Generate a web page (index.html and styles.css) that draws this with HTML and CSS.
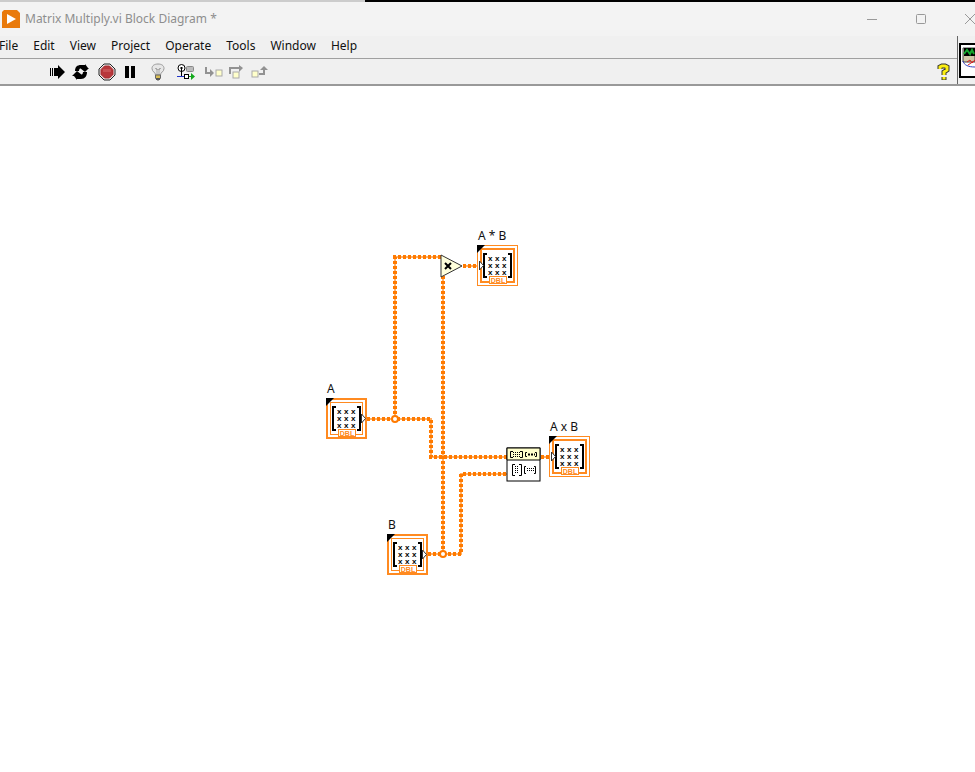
FILE: index.html
```html
<!DOCTYPE html>
<html lang="en">
  <head>
    <meta charset="utf-8">
    <title>Matrix Multiply.vi Block Diagram</title>
    <link rel="stylesheet" href="styles.css">
  </head>
  <body>
    <header class="titlebar">
      <svg class="app-icon" width="18" height="18" viewBox="0 0 18 18">
        <path d="M2 0H15L18 3V18H0V2Z" fill="#e97a0c"/>
        <path d="M5 4L14 9L5 14Z" fill="#fff"/>
      </svg>
      <h1>Matrix Multiply.vi Block Diagram *</h1>
      <div class="window-buttons">
        <button type="button" aria-label="Minimize">
          <svg width="12" height="12"><path d="M1 6.5H11"/></svg>
        </button>
        <button type="button" aria-label="Maximize">
          <svg width="12" height="12"><rect x="1.5" y="1.5" width="9" height="9" rx="1"/></svg>
        </button>
        <button type="button" aria-label="Close">
          <svg width="12" height="12"><path d="M1 1L11 11M11 1L1 11"/></svg>
        </button>
      </div>
    </header>

    <div class="chrome">
      <div class="bars">
        <nav class="menu">
          <a href="#">File</a>
          <a href="#">Edit</a>
          <a href="#">View</a>
          <a href="#">Project</a>
          <a href="#">Operate</a>
          <a href="#">Tools</a>
          <a href="#">Window</a>
          <a href="#">Help</a>
        </nav>
        <div class="toolbar">
          <button type="button" aria-label="Run">
            <svg width="18" height="16" viewBox="0 0 18 16">
              <path d="M2.500 4V12M4.500 4V12M6.500 4V12" stroke="#000"/>
              <path d="M7 4H10V1L17 8L10 15V12H7Z"/>
            </svg>
          </button>
          <button type="button" aria-label="Run continuously">
            <svg width="18" height="16" viewBox="0 0 18 16">
              <path d="M3 7C3 3 5 1 9 1H13V0L16 4H17L13 8L8 4H10C8 4 7 5 7 7Z"/>
              <path d="M15 8C15 12 13 15 9 15H5V16L2 12L0 12L5 7L10 11H8C10 11 11 10 11 8Z"/>
            </svg>
          </button>
          <button type="button" class="abort" aria-label="Abort">
            <svg width="18" height="18" viewBox="0 0 18 18">
              <path d="M6 1H12L17 6V12L12 17H6L1 12V6Z" fill="#eee" stroke="#222"/>
              <path d="M6.500 3H11.500L15 6.500V11.500L11.500 15H6.500L3 11.500V6.500Z" fill="#b8373b" stroke="#a52d31"/>
              <path d="M5 6H13V9H5Z" fill="#d06064" opacity=".6"/>
            </svg>
          </button>
          <button type="button" class="pause" aria-label="Pause">
            <svg width="12" height="12"><path d="M1 0H5V12H1ZM7 0H11V12H7Z"/></svg>
          </button>
          <button type="button" class="bulb" aria-label="Highlight execution">
            <svg width="14" height="18" viewBox="0 0 14 18">
              <path d="M4.500 12C4.500 9 1 9 1 5.500C1 2.500 3.500 1 7 1S13 2.500 13 5.500C13 9 9.500 9 9.500 12Z" fill="#e6e6e6" stroke="#999"/>
              <path d="M4 5L6 7V12M10 5L8 7V12M5 5L7 7L9 5" fill="none" stroke="#aaa"/>
              <path d="M4.500 12H9.500V15L8 17H6L4.500 15Z" fill="#d8bd55" stroke="#666"/>
              <path d="M5 15H9V17H5Z" fill="#555"/>
            </svg>
          </button>
          <button type="button" class="retain" aria-label="Retain wire values">
            <svg width="18" height="16" viewBox="0 0 18 16">
              <circle cx="4.500" cy="4" r="3.500" fill="#fff" stroke="#000"/>
              <path d="M3 4H6M4.500 3V12" stroke="#000"/>
              <rect x="9.500" y="2.500" width="7" height="5" rx="1" fill="#bbb" stroke="#888"/>
              <path d="M0 12.500H8" stroke="#2134c9"/>
              <rect x="7.500" y="10.500" width="4" height="4" fill="#fff" stroke="#000"/>
              <path d="M12 12H14V9L18 12.500L14 16V13H12Z" fill="#12a91b"/>
            </svg>
          </button>
          <div class="steps">
            <button type="button" aria-label="Step into">
              <svg class="step" width="18" height="14" viewBox="0 0 18 14">
                <path d="M1 2V8H7"/><path class="head" d="M5 4L9 8L5 12Z"/>
                <rect x="11" y="5" width="6" height="6"/>
              </svg>
            </button>
            <button type="button" aria-label="Step over">
              <svg class="step" width="18" height="14" viewBox="0 0 18 14">
                <path d="M2 9V3H12"/><path class="head" d="M11 0L15 3L11 7Z"/>
                <rect x="5" y="7" width="6" height="6"/>
              </svg>
            </button>
            <button type="button" aria-label="Step out">
              <svg class="step" width="18" height="14" viewBox="0 0 18 14">
                <path d="M8 9H13V4"/><path class="head" d="M9 5L13 1L17 5Z"/>
                <rect x="1" y="6" width="6" height="6"/>
              </svg>
            </button>
          </div>
          <button type="button" class="help" aria-label="Context help">
            <svg width="13" height="18" viewBox="0 0 13 18" fill="none">
              <path d="M3 6V4L5 3H8L10 4V7L7 9V12M7 14V17" stroke="#333" stroke-width="5"/>
              <path d="M3 6V4L5 3H8L10 4V7L7 9V12M7 14V16.500" stroke="#fbee12" stroke-width="3"/>
            </svg>
          </button>
        </div>
      </div>
      <div class="vi-icon">
        <svg width="16" height="35" viewBox="0 0 16 35">
          <path d="M17 1H1V34H17" fill="#fff" stroke="#000" stroke-width="2"/>
          <path d="M4 5H16V19H4Z" fill="#d0c8a8" stroke="#444"/>
          <path d="M5 5H16V13H5Z" fill="#000"/>
          <path d="M5 11L8 7L11 11L13 7L15 11" fill="none" stroke="#15a82f" stroke-width="2"/>
          <path d="M4 18C5 22 9 24 16 24" fill="none" stroke="#3540c0"/>
          <path d="M8 19L11 17L13 20L16 17M9 22L15 18" fill="none" stroke="#d22"/>
        </svg>
      </div>
    </div>

    <main class="diagram">
      <svg class="defs" width="0" height="0">
        <symbol id="terminal" viewBox="0 0 41 41">
          <path d="M10 9H7V32H10M31 9H34V32H31" fill="none" stroke="#000" stroke-width="2"/>
          <path d="M0 0H8L0 8Z"/>
          <rect x="12.500" y="31.500" width="17" height="7" fill="#fff" stroke="#ff8a20"/>
        </symbol>
      </svg>

      <svg class="wires">
        <g class="wire">
          <path d="M367 333H431V371H507"/>
          <path d="M395 333V171H441"/>
          <path d="M428 468H461V388H507"/>
          <path d="M443 468V190"/>
          <path d="M463 180H478"/>
          <path d="M541 371H551"/>
        </g>
        <g class="wire beads">
          <path d="M367 333H431V371H507"/>
          <path d="M395 333V171H441"/>
          <path d="M428 468H461V388H507"/>
          <path d="M443 468V190"/>
          <path d="M463 180H478"/>
          <path d="M541 371H551"/>
        </g>
        <circle class="joint" cx="395" cy="333" r="3"/>
        <circle class="joint" cx="443" cy="468" r="3"/>
      </svg>

      <div class="node control a">
        <span>A</span>
        <svg width="41" height="41">
          <rect class="frame" x="1" y="1" width="39" height="39"/>
          <rect class="inner" x="4.500" y="4.500" width="32" height="32"/>
          <use href="#terminal"/>
          <text class="cells" x="11 18 25" y="16">xxx</text>
          <text class="cells" x="11 18 25" y="23">xxx</text>
          <text class="cells" x="11 18 25" y="30">xxx</text>
          <text class="type" x="21" y="38">DBL</text>
          <path class="port" d="M35.500 16L39.500 20.500L35.500 25Z"/>
        </svg>
      </div>
      <div class="node control b">
        <span>B</span>
        <svg width="41" height="41">
          <rect class="frame" x="1" y="1" width="39" height="39"/>
          <rect class="inner" x="4.500" y="4.500" width="32" height="32"/>
          <use href="#terminal"/>
          <text class="cells" x="11 18 25" y="16">xxx</text>
          <text class="cells" x="11 18 25" y="23">xxx</text>
          <text class="cells" x="11 18 25" y="30">xxx</text>
          <text class="type" x="21" y="38">DBL</text>
          <path class="port" d="M35.500 16L39.500 20.500L35.500 25Z"/>
        </svg>
      </div>
      <div class="node indicator product">
        <span>A * B</span>
        <svg width="41" height="41">
          <rect class="frame" x="0.500" y="0.500" width="40" height="40"/>
          <rect class="inner" x="4" y="4" width="33" height="33"/>
          <use href="#terminal"/>
          <text class="cells" x="11 18 25" y="16">xxx</text>
          <text class="cells" x="11 18 25" y="23">xxx</text>
          <text class="cells" x="11 18 25" y="30">xxx</text>
          <text class="type" x="21" y="38">DBL</text>
          <path class="port" d="M2.500 16L6.500 20.500L2.500 25Z"/>
        </svg>
      </div>
      <div class="node indicator cross">
        <span>A x B</span>
        <svg width="41" height="41">
          <rect class="frame" x="0.500" y="0.500" width="40" height="40"/>
          <rect class="inner" x="4" y="4" width="33" height="33"/>
          <use href="#terminal"/>
          <text class="cells" x="11 18 25" y="16">xxx</text>
          <text class="cells" x="11 18 25" y="23">xxx</text>
          <text class="cells" x="11 18 25" y="30">xxx</text>
          <text class="type" x="21" y="38">DBL</text>
          <path class="port" d="M2.500 16L6.500 20.500L2.500 25Z"/>
        </svg>
      </div>

      <div class="node multiply">
        <svg width="24" height="24">
          <path d="M1 1L22 12L1 23Z" fill="#ffffdc" stroke="#333"/>
          <path d="M5 9L11 15M11 9L5 15" stroke="#000" stroke-width="2"/>
        </svg>
      </div>

      <div class="node matmul">
        <svg width="35" height="35" fill="none" stroke="#000">
          <rect x="1" y="1" width="33" height="33" fill="#fff"/>
          <path d="M1 1H34V13H1Z" fill="#ffffcb"/>
          <path d="M7 4.500H4.500V10.500H7M14 4.500H16.500V10.500H14M21 5.500H19.500V9.500H21M29 5.500H30.500V9.500H29"/>
          <path d="M7 5.500H14M7 7.500H14M7 9.500H14" stroke-dasharray="1 1"/>
          <path d="M22 7.500H29" stroke-width="2" stroke-dasharray="2 1"/>
          <path d="M9 17.500H6.500V28.500H9M13 17.500H15.500V28.500H13M20 19.500H18.500V26.500H20M28 19.500H29.500V26.500H28"/>
          <path d="M9 19.500H13M9 21.500H13M9 23.500H13M9 25.500H13M21 21.500H28M21 23.500H28" stroke-dasharray="1 1"/>
        </svg>
      </div>
    </main>
  </body>
</html>
```

FILE: styles.css
```css
* {
  box-sizing: border-box;
}
body {
  margin: 0;
  min-height: 100vh;
  display: flex;
  flex-direction: column;
  overflow: hidden;
  background: #fff;
  color: #111;
  font-family: "Noto Sans", "Open Sans", sans-serif;
  font-size: 12px;
  line-height: 16px;
}
svg {
  display: block;
  flex: none;
}
button {
  display: flex;
  padding: 0;
  border: 0;
  background: none;
}

/* title bar */
.titlebar {
  display: flex;
  align-items: center;
  gap: 5px;
  height: 36px;
  padding-left: 2px;
  background: #f3f3f3;
  border-top: 2px solid;
  border-image: linear-gradient(to right, #ccc 366px, #000 366px) 2;
}
.titlebar h1 {
  margin: 0;
  color: #8e8e8e;
  font-size: 12px;
  font-weight: normal;
}
.window-buttons {
  display: flex;
  gap: 37px;
  margin-left: auto;
  margin-right: -1px;
}
.window-buttons svg {
  fill: none;
  stroke: #999;
}

/* menu and toolbar */
.chrome {
  display: flex;
  background: #f0f0f0;
  border-bottom: 2px solid #999;
}
.bars {
  flex: 1;
}
.menu {
  display: flex;
  gap: 15px;
  height: 23px;
  padding-bottom: 2px;
  align-items: center;
  border-bottom: 1px solid #a0a0a0;
}
.menu a {
  color: #111;
  text-decoration: none;
}
.menu a:first-child {
  margin-left: -1px;
}
.toolbar {
  display: flex;
  align-items: center;
  gap: 6px;
  height: 25px;
  padding-left: 48px;
  padding-right: 7px;
}
.abort {
  margin-left: 2px;
}
.pause {
  margin-left: 2px;
}
.bulb {
  margin-left: 9px;
}
.retain {
  margin-left: 6px;
}
.steps {
  display: flex;
  gap: 5px;
  margin-left: 4px;
}
.step {
  fill: none;
  stroke: #929292;
  stroke-width: 2;
}
.step .head {
  fill: #929292;
  stroke: none;
}
.step rect {
  fill: #ffffcb;
  stroke: #aaa;
  stroke-width: 1;
}
.help {
  margin-left: auto;
}
.vi-icon {
  width: 18px;
  padding-top: 7px;
  padding-left: 1px;
  border-left: 1px solid #666;
}

/* block diagram canvas */
.diagram {
  position: relative;
  flex: 1;
}
.defs {
  position: absolute;
}
.wires {
  position: absolute;
  width: 100%;
  height: 100%;
  fill: none;
}
.wire {
  stroke: #ffb066;
  stroke-width: 2;
}
.beads {
  stroke: #ff7a00;
  stroke-width: 4;
  stroke-dasharray: 3 2;
}
.joint {
  fill: #fff;
  stroke: #ff7a00;
  stroke-width: 2;
}
.node {
  position: absolute;
}
.node span {
  display: block;
  padding-left: 1px;
  margin-bottom: 1px;
}
.frame,
.inner {
  fill: #fff;
  stroke: #ff8a20;
}
.control .frame {
  stroke-width: 2;
}
.indicator .inner {
  stroke-width: 2;
}
.port {
  fill: #fff;
  stroke: #333;
}
.cells {
  font: bold 8px "Liberation Sans", sans-serif;
}
.type {
  fill: #ff8a20;
  font: bold 7px "Liberation Sans", sans-serif;
  text-anchor: middle;
}
.a {
  left: 326px;
  top: 295px;
}
.b {
  left: 387px;
  top: 431px;
}
.product {
  left: 477px;
  top: 142px;
}
.cross {
  left: 549px;
  top: 333px;
}
.multiply {
  left: 440px;
  top: 168px;
}
.matmul {
  left: 506px;
  top: 361px;
}
```
